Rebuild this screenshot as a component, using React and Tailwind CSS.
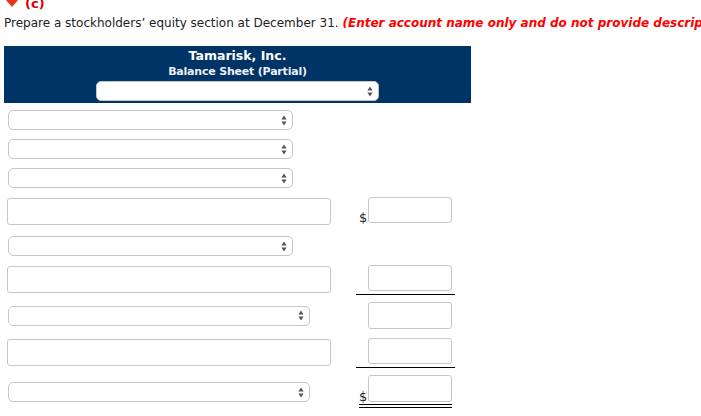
const font = { fontFamily: 'Verdana, "DejaVu Sans", sans-serif' };

const Arrows = () => (
  <svg width="6" height="11" viewBox="0 0 6 11" className="shrink-0">
    <path d="M3 0.5 L5.6 4.5 L0.4 4.5 Z" fill="#555" />
    <path d="M3 10.5 L5.6 6.5 L0.4 6.5 Z" fill="#555" />
  </svg>
);

const Select = ({ wide }) => (
  <div
    className={`${wide ? 'w-[302px]' : 'w-[285px]'} h-[20px] ml-[8px] rounded-[5px] border border-[#c6c6c6] bg-white flex items-center justify-end pr-[5px]`}
  >
    <Arrows />
  </div>
);

const TextBox = () => (
  <div className="w-[324px] h-[27px] ml-[7px] rounded-[3px] border border-[#c6c6c6] bg-white" />
);

const Amount = () => (
  <div className="w-[84px] h-[26px] rounded-[3px] border border-[#c6c6c6] bg-white" />
);

export default function App() {
  return (
    <div className="w-[701px] h-[416px] overflow-hidden bg-white text-[#222]" style={font}>
      <div className="flex items-center h-[10px] -mt-[2px] pl-[5px] gap-[6px]">
        <svg width="14" height="8" viewBox="0 0 14 8">
          <path d="M0 0 L14 0 L7 8 Z" fill="#e8361e" />
        </svg>
        <span className="text-[13px] font-bold text-[#d90000] leading-none">(c)</span>
      </div>
      <div className="mt-[6px] pl-[4px] text-[12px] whitespace-nowrap leading-[18px]">
        Prepare a stockholders’ equity section at December 31.{' '}
        <span className="font-bold italic text-[#ff0000]">
          (Enter account name only and do not provide descriptive information.)
        </span>
      </div>

      <div className="ml-[4px] mt-[14px] w-[467px] h-[57px] bg-[#003366] flex flex-col items-center pt-[1px]">
        <div className="text-[12.5px] font-bold text-white leading-[17px]">Tamarisk, Inc.</div>
        <div className="text-[11px] font-bold text-[#eef0f4] leading-[16px] tracking-[-0.2px]">Balance Sheet (Partial)</div>
        <div className="mt-[1px] w-[283px] h-[20px] rounded-[5px] border border-[#c6c6c6] bg-white flex items-center justify-end pr-[5px]">
          <Arrows />
        </div>
      </div>

      {/* rows */}
      <div className="mt-[3px] flex flex-col">
        <div className="h-[28px] flex items-center"><Select /></div>
        <div className="h-[30px] flex items-center"><Select /></div>
        <div className="h-[28px] flex items-center"><Select /></div>

        <div className="h-[39px] flex">
          <div className="w-[356px] flex items-center"><TextBox /></div>
          <div className="mt-[5px] self-start flex items-end">
            <span className="w-[12px] pl-[3px] text-[13px] leading-[14px] -mb-[2px]">$</span>
            <Amount />
          </div>
        </div>

        <div className="h-[30px] flex items-center"><Select /></div>

        <div className="h-[37px] flex">
          <div className="w-[356px] flex items-center"><TextBox /></div>
          <div className="mt-[4px] w-[99px] pl-[12px] pb-[3px] border-b border-black self-start">
            <Amount />
          </div>
        </div>

        <div className="h-[35px] flex">
          <div className="w-[356px] flex items-center"><Select wide /></div>
          <div className="mt-[4px] pl-[12px] self-start">
            <div className="w-[84px] h-[27px] rounded-[3px] border border-[#c6c6c6] bg-white" />
          </div>
        </div>

        <div className="h-[38px] flex">
          <div className="w-[356px] flex items-center"><TextBox /></div>
          <div className="mt-[5px] w-[99px] pl-[12px] pb-[3px] border-b border-black self-start">
            <Amount />
          </div>
        </div>

        <div className="h-[45px] flex">
          <div className="w-[356px] pt-[11px]"><Select wide /></div>
          <div className="mt-[4px] ml-[3px] w-[93px] self-start">
            <div className="flex items-end">
              <span className="w-[9px] text-[13px] leading-[14px] -mb-[2px]">$</span>
              <div className="w-[84px] h-[27px] rounded-[3px] border border-[#c6c6c6] bg-white" />
            </div>
            <div className="mt-[2px] h-px bg-black" />
            <div className="mt-[2px] h-px bg-black" />
          </div>
        </div>
      </div>
    </div>
  );
}
